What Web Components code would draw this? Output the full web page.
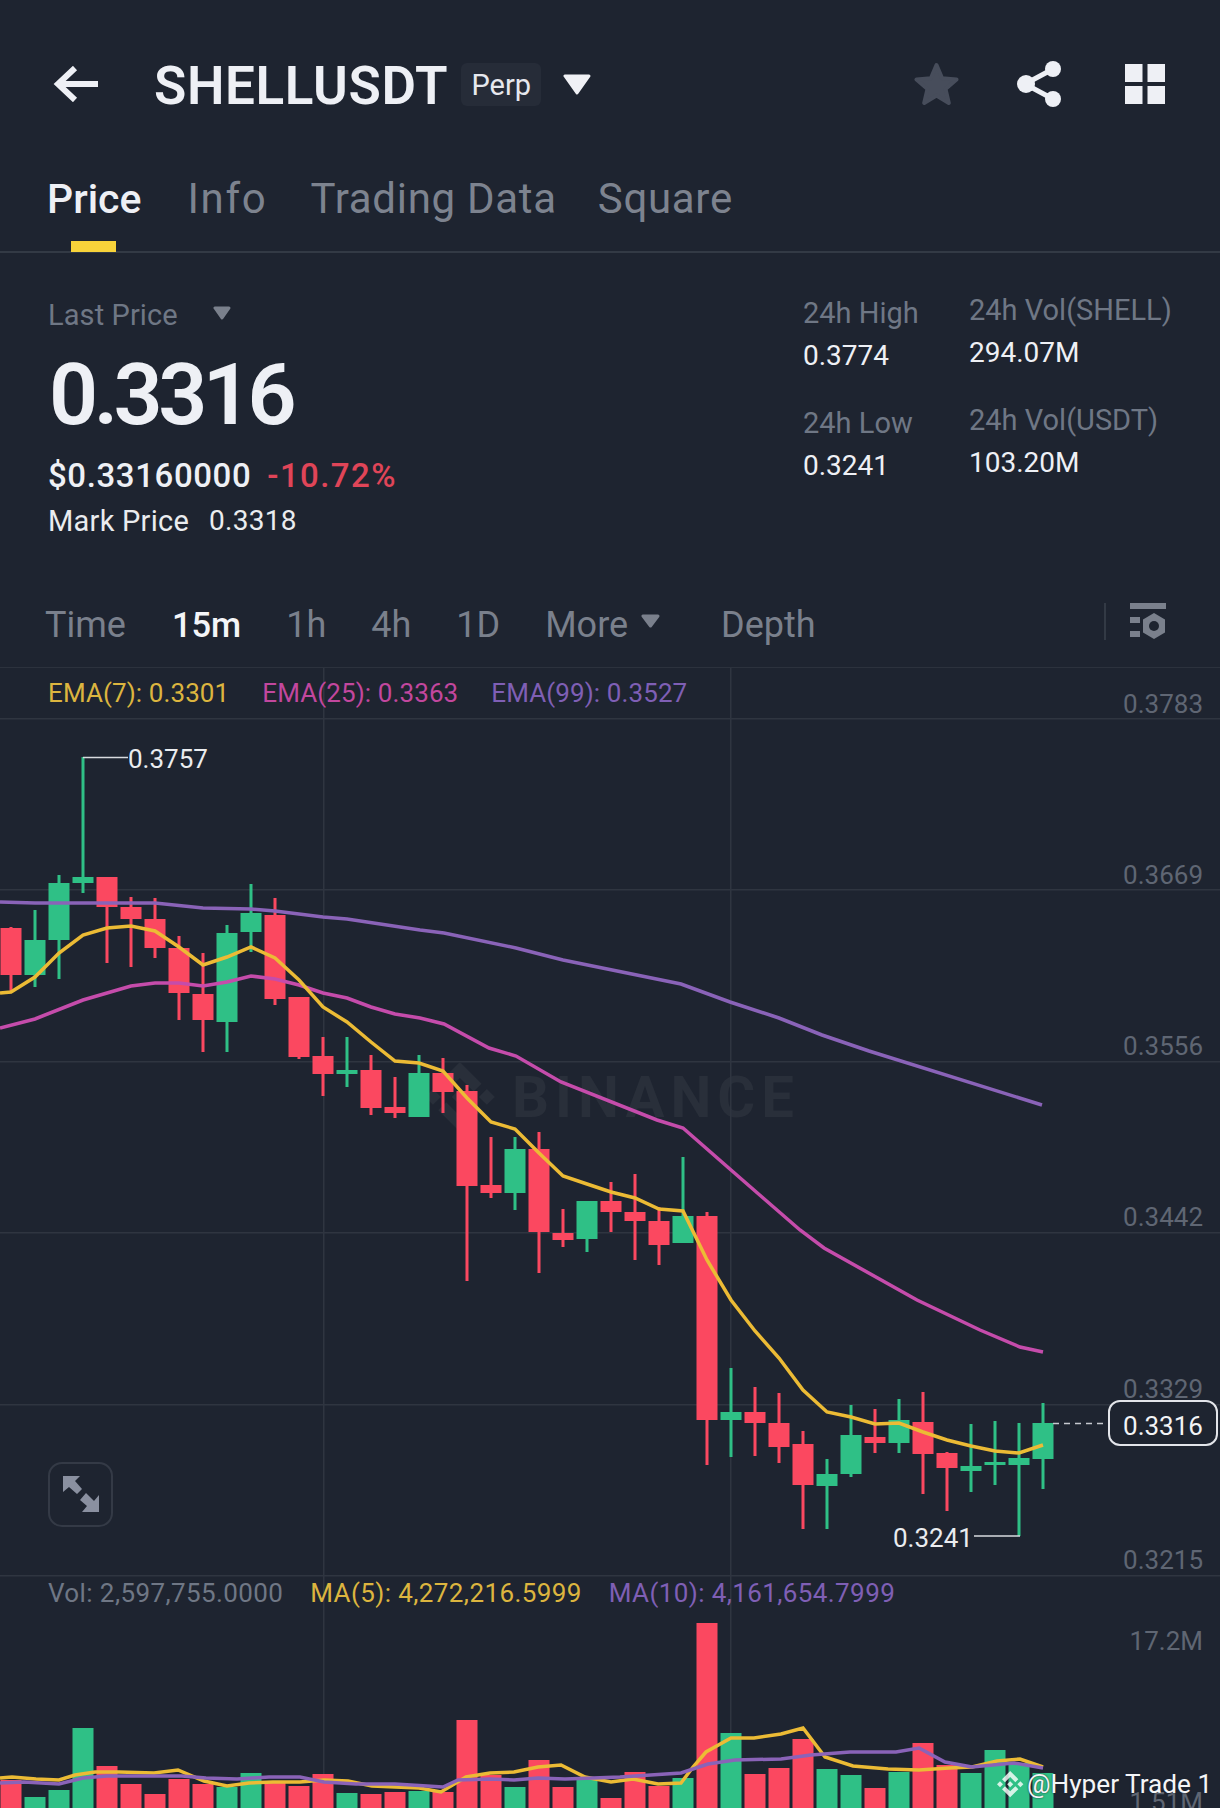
<!DOCTYPE html>
<html lang="en">
<head>
<meta charset="utf-8">
<title>SHELLUSDT Perp</title>
<style>
  html, body { margin: 0; background: #1e2430; }
  body { font-family: Roboto, "Liberation Sans", sans-serif; color: #eaecef; }
</style>
</head>
<body>
<futures-page></futures-page>

<script>
class TopBar extends HTMLElement {
  constructor() {
    super();
    this.attachShadow({ mode: 'open' });
    this.shadowRoot.innerHTML = `
      <style>
        :host { display: flex; align-items: center; box-sizing: border-box; height: 168px; padding: 0 55px 0 53px; }
        svg { display: block; flex: none; }
        .title { margin-left: 56px; font-size: 53px; line-height: 60px; font-weight: 600; color: #eef0f5; letter-spacing: .6px; position: relative; top: 2px; }
        .perp { margin-left: 13px; width: 80px; height: 43px; display: flex; align-items: center; justify-content: center; background: #262c38; border-radius: 6px; font-size: 29px; color: #e6e8ee; padding-top: 2px; box-sizing: border-box; }
        .caret { margin-left: 22px; }
        .actions { margin-left: auto; display: flex; align-items: center; }
        .share { margin-left: 58px; }
        .grid { margin-left: 64px; }
      </style>
      <svg width="45" height="36" viewBox="0 0 45 36" fill="none" stroke="#eef0f5" stroke-width="6"><path d="M45 18H5M22 2 5 18l17 16"/></svg>
      <div class="title">SHELLUSDT</div>
      <div class="perp">Perp</div>
      <svg class="caret" width="28" height="21" viewBox="0 0 28 21"><path d="M2 2h24L14 19z" fill="#f0f1f5" stroke="#f0f1f5" stroke-width="3" stroke-linejoin="round"/></svg>
      <div class="actions">
        <svg width="45" height="46" viewBox="0 0 45 46"><path d="M22.500 4 28.100 17.300 42.500 18.500 31.500 27.900 34.800 42 22.500 34.500 10.200 42 13.500 27.900 2.500 18.500 16.900 17.300z" fill="#474d5b" stroke="#474d5b" stroke-width="4" stroke-linejoin="round"/></svg>
        <svg class="share" width="44" height="46" viewBox="0 0 44 46" fill="#eef0f5" stroke="#eef0f5"><path d="M36 8 8 23l28 15" fill="none" stroke-width="5"/><circle cx="36" cy="8" r="8" stroke="none"/><circle cx="9" cy="23" r="9" stroke="none"/><circle cx="36" cy="38" r="8" stroke="none"/></svg>
        <svg class="grid" width="40" height="40" viewBox="0 0 40 40" fill="#eef0f5"><rect width="17.500" height="18"/><rect x="22.500" width="17.500" height="18"/><rect y="22" width="17.500" height="18"/><rect x="22.500" y="22" width="17.500" height="18"/></svg>
      </div>`;
  }
}

class TabBar extends HTMLElement {
  constructor() {
    super();
    this.attachShadow({ mode: 'open' });
    this.shadowRoot.innerHTML = `
      <style>
        :host { display: flex; gap: 43px; box-sizing: border-box; height: 85px; padding: 8px 0 0 47px; border-bottom: 2px solid #333a45; font-size: 42px; line-height: 46px; letter-spacing: .7px; color: #7d838f; }
        .on { position: relative; margin-right: 3px; font-size: 41px; color: #eef0f5; font-weight: 500; letter-spacing: 0; }
        .on::after { content: ''; position: absolute; left: 24px; top: 65px; width: 45px; height: 11px; background: #f8d33a; }
        .info { letter-spacing: 1.700px; }
        .sq { margin-left: -2px; }
      </style>
      <span class="on">Price</span><span class="info">Info</span><span>Trading Data</span><span class="sq">Square</span>`;
  }
}

class StatItem extends HTMLElement {
  constructor() {
    super();
    this.attachShadow({ mode: 'open' });
    this.shadowRoot.innerHTML = `
      <style>
        :host { display: flex; flex-direction: column; gap: 8.500px; }
        ::slotted([slot=label]) { font-size: 29px; line-height: 34px; color: #6f7785; }
        ::slotted([slot=value]) { font-size: 28px; line-height: 34px; color: #eef0f5; }
      </style>
      <slot name="label"></slot><slot name="value"></slot>`;
  }
}

class PricePanel extends HTMLElement {
  constructor() {
    super();
    this.attachShadow({ mode: 'open' });
    this.shadowRoot.innerHTML = `
      <style>
        :host { display: flex; box-sizing: border-box; height: 337px; padding-left: 48px; }
        .left { width: 755px; padding-top: 44px; }
        .last { display: flex; align-items: center; font-size: 29px; line-height: 36px; letter-spacing: .1px; color: #6f7785; }
        .last svg { margin-left: 35px; margin-top: -4px; }
        .big { margin-top: 19px; margin-left: 1px; font-size: 86px; line-height: 86px; font-weight: 600; letter-spacing: -4.500px; color: #eef0f5; }
        .sub { margin-top: 17.500px; display: flex; gap: 16px; font-size: 33px; line-height: 40px; font-weight: 500; letter-spacing: .6px; color: #eef0f5; }
        .sub b { font-weight: 500; color: #e04558; letter-spacing: 1.400px; }
        .mark { margin-top: 7.500px; display: flex; gap: 20px; font-size: 29px; line-height: 36px; letter-spacing: .25px; color: #eaecef; }
        .mark span + span { font-size: 28px; }
        .stats { display: flex; flex-direction: column; gap: 33.500px; }
        .c1 { width: 166px; padding-top: 43px; }
        .c2 { padding-top: 40px; }
      </style>
      <div class="left">
        <div class="last">Last Price<svg width="18" height="14" viewBox="0 0 18 14"><path d="M2 2h14L9 12z" fill="#7a808c" stroke="#7a808c" stroke-width="3" stroke-linejoin="round"/></svg></div>
        <div class="big">0.3316</div>
        <div class="sub"><span>$0.33160000</span><b>-10.72%</b></div>
        <div class="mark"><span>Mark Price</span><span>0.3318</span></div>
      </div>
      <div class="stats c1">
        <stat-item><span slot="label">24h High</span><span slot="value">0.3774</span></stat-item>
        <stat-item><span slot="label">24h Low</span><span slot="value">0.3241</span></stat-item>
      </div>
      <div class="stats c2">
        <stat-item><span slot="label">24h Vol(SHELL)</span><span slot="value">294.07M</span></stat-item>
        <stat-item><span slot="label">24h Vol(USDT)</span><span slot="value">103.20M</span></stat-item>
      </div>`;
  }
}

class IntervalBar extends HTMLElement {
  constructor() {
    super();
    this.attachShadow({ mode: 'open' });
    this.shadowRoot.innerHTML = `
      <style>
        :host { display: flex; align-items: flex-start; gap: 45px; box-sizing: border-box; height: 78px; padding: 13px 54px 0 45px; border-bottom: 1px solid #2c323d; font-size: 36px; line-height: 44px; color: #7a808c; }
        .time { margin-right: 1px; }
        .on { color: #f4f5f8; font-weight: 500; font-size: 34.500px; }
        .more { display: flex; align-items: center; gap: 13px; margin-right: 16px; }
        .more svg { margin-top: -9px; }
        .tools { margin-left: auto; display: flex; align-items: flex-start; gap: 24px; }
        .sep { width: 2px; height: 37px; background: #333a45; }
        svg { display: block; }
      </style>
      <span class="time">Time</span><span class="on">15m</span><span>1h</span><span>4h</span><span>1D</span>
      <span class="more">More<svg width="19" height="14" viewBox="0 0 19 14"><path d="M2 2h15L9.500 12z" fill="#7a808c" stroke="#7a808c" stroke-width="3" stroke-linejoin="round"/></svg></span>
      <span>Depth</span>
      <div class="tools">
        <div class="sep"></div>
        <svg width="36" height="36" viewBox="0 0 36 36" fill="#7a808c"><rect width="36" height="6"/><rect y="14" width="10" height="6"/><rect y="28" width="10" height="6"/><path d="M22 10 33 16.500V29.500L22 36 11 29.500V16.500z" transform="translate(2 0)"/><circle cx="24" cy="23" r="5" fill="#1e2430"/></svg>
      </div>`;
  }
}

// [x index is 11 + 24n] color, high, bodyTop, bodyBottom, low
const CANDLES = [
  ['r',927,928,975,993],['g',910,940,975,987],['g',875,883,940,979],['g',757,877,883,893],
  ['r',877,877,907,963],['r',897,907,919,967],['r',898,919,948,958],['r',936,948,993,1020],
  ['r',953,994,1020,1052],['g',925,933,1022,1052],['g',884,913,932,952],['r',898,915,999,1005],
  ['r',997,997,1057,1059],['r',1037,1056,1074,1096],['g',1037,1070,1074,1087],['r',1055,1070,1108,1115],
  ['r',1077,1107,1113,1118],['g',1055,1073,1117,1117],['r',1058,1073,1092,1113],['r',1085,1091,1186,1281],
  ['r',1137,1185,1193,1198],['g',1137,1149,1193,1210],['r',1132,1149,1232,1273],['r',1209,1233,1240,1247],
  ['g',1201,1201,1239,1252],['r',1182,1201,1212,1232],['r',1174,1212,1221,1260],['r',1207,1221,1245,1265],
  ['g',1157,1216,1243,1243],['r',1212,1216,1420,1465],['g',1368,1412,1420,1457],['r',1387,1412,1423,1456],
  ['r',1393,1423,1447,1463],['r',1431,1444,1485,1529],['g',1459,1474,1486,1529],['g',1405,1435,1474,1477],
  ['r',1409,1437,1443,1453],['g',1399,1420,1443,1453],['r',1392,1422,1454,1494],['r',1452,1453,1468,1511],
  ['g',1424,1466,1471,1492],['g',1421,1462,1465,1485],['g',1423,1458,1465,1536],['g',1403,1423,1459,1489]
];

const VOL_TOPS = [1780,1797,1790,1728,1766,1784,1794,1779,1784,1787,1773,1783,1786,1774,1793,1794,1792,1791,1792,1720,1775,1787,1760,1787,1778,1798,1772,1786,1778,1623,1733,1774,1768,1739,1769,1775,1788,1772,1743,1765,1773,1750,1763,1773];

const EMA7 = '0,993 11,992 35,977 59,953 83,935 107,928 131,926 155,931 179,947 203,965 227,957 251,947 275,958 299,980 323,1007 347,1022 371,1042 395,1061 419,1063 443,1071 467,1098 491,1122 515,1129 539,1153 563,1176 587,1184 611,1192 635,1198 659,1209 683,1211 707,1260 731,1300 755,1331 779,1358 803,1390 827,1412 851,1417 875,1424 899,1423 923,1432 947,1440 971,1446 995,1451 1019,1453 1043,1445';
const EMA25 = '0,1028 35,1019 83,1000 131,986 155,983 179,983 203,986 227,982 251,976 275,979 299,985 323,993 347,998 371,1007 395,1014 420,1018 444,1024 489,1048 516,1056 561,1082 657,1120 683,1128 731,1170 800,1230 824,1248 917,1300 980,1330 1020,1347 1043,1352';
const EMA99 = '0,902 35,903 107,903 155,903 203,908 251,909 275,911 323,917 347,919 420,930 444,933 516,948 563,960 681,984 730,1002 779,1018 822,1035 869,1051 1042,1105';
const MA5 = '0,1778 12,1777 36,1779 59,1780 75,1775 95,1772 119,1772 154,1773 178,1770 204,1781 227,1786 249,1783 273,1782 300,1782 324,1780 348,1781 372,1786 395,1787 419,1788 441,1792 466,1777 490,1773 514,1772 538,1767 561,1765 585,1777 611,1782 633,1779 658,1784 681,1783 693,1767 706,1752 731,1738 754,1738 781,1734 803,1728 825,1757 853,1766 888,1769 919,1770 949,1768 972,1767 997,1761 1020,1759 1043,1767';
const MA10 = '0,1783 24,1782 59,1784 83,1778 107,1776 154,1776 182,1776 206,1778 237,1779 269,1777 300,1777 324,1782 356,1784 395,1784 443,1787 458,1780 490,1779 514,1780 538,1778 565,1779 593,1778 620,1777 681,1773 708,1764 735,1760 781,1759 811,1755 850,1752 896,1752 919,1748 945,1762 972,1767 1014,1763 1043,1768';

const LOGO = `
  <path d="M38.171 53.203 62.759 28.616l24.6 24.6 14.307-14.306L62.759 0 23.864 38.896z"/>
  <path d="M0 62.759l14.307-14.307 14.306 14.307L14.307 77.066z"/>
  <path d="M38.171 72.314l24.588 24.587 24.6-24.6 14.313 14.3-38.913 38.9-38.894-38.895z"/>
  <path d="M96.905 62.759l14.307-14.307L125.519 62.76l-14.307 14.306z"/>
  <path d="M77.27 62.752 62.76 48.234 52.028 58.966l-1.238 1.237-2.543 2.543 14.512 14.512 14.511-14.506z"/>`;

class KlineChart extends HTMLElement {
  constructor() {
    super();
    this.attachShadow({ mode: 'open' });

    const colors = { r: '#fb4860', g: '#2fc086' };
    let marks = '';
    CANDLES.forEach((c, i) => {
      const x = 11 + 24 * i;
      marks += `<rect x="${x - 1.5}" y="${c[1]}" width="3" height="${c[4] - c[1]}" fill="${colors[c[0]]}"/>`;
      marks += `<rect x="${x - 10.5}" y="${c[2]}" width="21" height="${c[3] - c[2]}" fill="${colors[c[0]]}"/>`;
      marks += `<rect x="${x - 10.5}" y="${VOL_TOPS[i]}" width="21" height="${1808 - VOL_TOPS[i]}" fill="${colors[c[0]]}"/>`;
    });

    let grid = '';
    [718, 889, 1061, 1232, 1404, 1575].forEach(y => {
      grid += `<rect x="0" y="${y}" width="1220" height="1.500" fill="#2f3540"/>`;
    });
    [323, 730].forEach(x => {
      grid += `<rect x="${x}" y="668" width="1.500" height="1140" fill="#2f3540"/>`;
    });

    const axis = [['0.3783', 23], ['0.3669', 194], ['0.3556', 365], ['0.3442', 536], ['0.3329', 708], ['0.3215', 879], ['17.2M', 960], ['1.51M', 1121]]
      .map(a => `<span class="axis" style="top:${a[1]}px">${a[0]}</span>`).join('');

    this.shadowRoot.innerHTML = `
      <style>
        :host { display: block; position: relative; height: 1140px; overflow: hidden; font-size: 26px; line-height: 26px; }
        svg.plot { position: absolute; left: 0; top: 0; }
        .legend { position: absolute; left: 48px; display: flex; white-space: nowrap; }
        .ema { top: 12px; gap: 33px; letter-spacing: .1px; }
        .vol { top: 912px; gap: 27px; letter-spacing: .4px; }
        .y { color: #dcb53f; } .p { color: #c2479e; } .v { color: #7f5fb5; } .g { color: #6f7785; }
        .axis { position: absolute; right: 17px; color: #5f6673; }
        .tag { position: absolute; color: #eaecef; }
        .last { position: absolute; left: 1108px; top: 732px; box-sizing: border-box; width: 110px; height: 46px; padding-top: 6px; display: flex; align-items: center; justify-content: center; border: 2px solid #e3e5ea; border-radius: 12px; background: #1e2430; color: #f2f3f6; }
        .mark { position: absolute; left: 512px; top: 400px; font-size: 58px; line-height: 58px; font-weight: 700; letter-spacing: 6px; color: #292f3a; }
        .expand { position: absolute; left: 48px; top: 794px; width: 65px; height: 65px; box-sizing: border-box; border: 2px solid #343a46; border-radius: 14px; }
        .expand svg { position: absolute; left: -2px; top: -2px; }
        .credit { position: absolute; left: 1027px; top: 1103px; font-size: 26.200px; line-height: 26px; color: #f4f5f7; white-space: nowrap; text-shadow: 0 0 2px #1e2430; }
      </style>
      <div class="mark">BINANCE</div>
      <svg class="plot" width="1220" height="1140" viewBox="0 668 1220 1140" fill="none">
        ${grid}
        <g transform="translate(425 1062) scale(.556)" fill="#292f3a">${LOGO}</g>
        ${marks}
        <polyline points="${EMA99}" stroke="#8a63b8" stroke-width="3.500"/>
        <polyline points="${EMA25}" stroke="#c54cab" stroke-width="3.500"/>
        <polyline points="${EMA7}" stroke="#ecbb35" stroke-width="3.500"/>
        <polyline points="${MA5}" stroke="#ecbb35" stroke-width="3.500"/>
        <polyline points="${MA10}" stroke="#8a63b8" stroke-width="3.500"/>
        <path d="M83 757.500h45M974 1536h46" stroke="#d8dade" stroke-width="1.500"/>
        <path d="M1053 1423.500h55" stroke="#c6c9cf" stroke-width="1.500" stroke-dasharray="6 5"/>
        <g transform="translate(997 1771) scale(.21)" fill="#fff" fill-opacity=".8">${LOGO}</g>
      </svg>
      <div class="legend ema"><span class="y">EMA(7): 0.3301</span><span class="p">EMA(25): 0.3363</span><span class="v">EMA(99): 0.3527</span></div>
      <div class="legend vol"><span class="g">Vol: 2,597,755.0000</span><span class="y">MA(5): 4,272,216.5999</span><span class="v">MA(10): 4,161,654.7999</span></div>
      ${axis}
      <span class="tag" style="left:128px;top:78px">0.3757</span>
      <span class="tag" style="left:893px;top:857px">0.3241</span>
      <div class="last">0.3316</div>
      <div class="expand"><svg width="65" height="65" viewBox="18 22 65 65" fill="#8a90a0"><path d="M33 36H50L45 41 52 49 47 54 39 47 33 52zM69 72H52L57 66 50 60 56 53 64 61 69 55z"/></svg></div>
      <div class="credit">@Hyper Trade 1</div>`;
  }
}

class FuturesPage extends HTMLElement {
  constructor() {
    super();
    this.attachShadow({ mode: 'open' });
    this.shadowRoot.innerHTML = `
      <style>
        :host { display: block; width: 1220px; height: 1808px; overflow: hidden; background: #1e2430; }
      </style>
      <top-bar></top-bar>
      <tab-bar></tab-bar>
      <price-panel></price-panel>
      <interval-bar></interval-bar>
      <kline-chart></kline-chart>`;
  }
}

customElements.define('top-bar', TopBar);
customElements.define('tab-bar', TabBar);
customElements.define('stat-item', StatItem);
customElements.define('price-panel', PricePanel);
customElements.define('interval-bar', IntervalBar);
customElements.define('kline-chart', KlineChart);
customElements.define('futures-page', FuturesPage);
</script>
</body>
</html>
